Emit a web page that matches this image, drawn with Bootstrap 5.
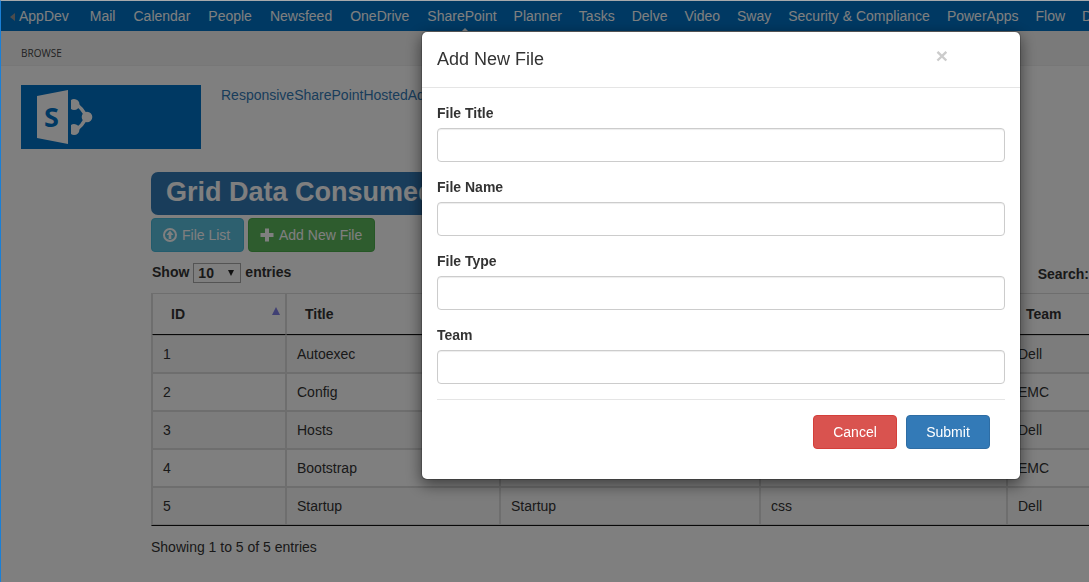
<!DOCTYPE html>
<html lang="en">
<head>
<meta charset="utf-8">
<meta name="viewport" content="width=device-width, initial-scale=1">
<title>Add New File</title>
<link href="https://cdn.jsdelivr.net/npm/bootstrap@5.3.0/dist/css/bootstrap.min.css" rel="stylesheet">
<style>
body { font-family: "Liberation Sans", Arial, sans-serif; font-size: 14px; line-height: 20px; color: #333; background: #fff; overflow: hidden; }
a { text-decoration: none; }
.page-shell { overflow: hidden; min-height: 100vh; }
.window-edge { position: fixed; inset: 0; z-index: 2000; pointer-events: none; border-top: 1px solid #a6a9ac; border-left: 1px solid #1a7fd6; }
.suite-bar { background: #0072c6; height: 31px; padding-left: 9px; padding-top: 1px; }
.suite-bar a { color: #fff; white-space: nowrap; }
.suite-bar .first-link { margin-right: 3px; }
.suite-links { gap: 18px; }
.suite-more { gap: 17px; }
.scroll-arrow { width: 6px; height: 10px; margin-right: 4px; margin-top: 2px; }
.current-link { position: relative; }
.current-link::after { content: ""; position: absolute; left: 50%; bottom: -5px; border: 3px solid transparent; border-top: 0; border-bottom-color: #fff; }
.ribbon { background: #f4f4f4; border-bottom: 1px solid #eee; height: 35px; padding: 12px 21px; font: 10px/20px "Open Sans", sans-serif; color: #444; }
.site-head { padding: 19px 21px 0; gap: 20px; }
.site-logo { width: 180px; height: 64px; background: #0072c6; }
.site-head a { color: #337ab7; }
.grid-area { margin-left: 151px; min-width: 1140px; padding-top: 23px; }
.grid-title { font-size: 27px; line-height: 30px; font-weight: 700; color: #fff; background: #337ab7; border-radius: 7px; padding: 5px 15px 8px; margin: 0 0 3px; }
.btn { font-size: 14px; line-height: 20px; padding: 6px 12px; border-radius: 4px; color: #fff; --bs-btn-color: #fff; }
.icon-btn { gap: 5px; padding: 6px 12px 6px 11px; }
.btn-list { background: #5bc0de; border-color: #46b8da; min-width: 93px; }
.btn-add { background: #5cb85c; border-color: #4cae4c; }
.btn-cancel { background: #d9534f; border-color: #d43f3a; min-width: 84px; }
.btn-submit { background: #337ab7; border-color: #2e6da4; min-width: 84px; }
.btn-icon { width: 14px; height: 14px; }
.grid-tools { font-weight: 700; margin-top: 10px; height: 31px; padding-left: 1px; }
.size-select { display: block; width: 48px; height: 20px; border: 1px solid #a9a9a9; border-radius: 0; padding: 0 4px; appearance: none; font-weight: 700; font-size: 14px; line-height: 18px; color: #333; background: #fff; }
.select-wrap { position: relative; margin: 1px 4px 0; }
.select-wrap svg { position: absolute; right: 7px; top: 7px; pointer-events: none; }
.search-box { width: 198px; height: 24px; }
.file-grid { border-collapse: separate; border-spacing: 0; table-layout: fixed; width: 1140px; border: 1px solid #ddd; border-top: 0; border-bottom-color: #111; }
.file-grid th, .file-grid td { border: 1px solid #ddd; padding: 8px 10px; }
.file-grid th { padding: 10px 18px; border-bottom-color: #111; }
.file-grid tbody tr:nth-child(odd) td { background: #f9f9f9; }
.sorted svg { position: absolute; right: 5px; top: 13px; }
.grid-info { padding-top: 11px; }
.modal { padding: 0; }
.modal-dialog { width: 600px; max-width: none; margin: 31px 68px 0 auto; }
.modal-content { border: 1px solid rgba(0,0,0,.2); border-radius: 6px; box-shadow: 0 5px 15px rgba(0,0,0,.5); background-clip: padding-box; color: #333; }
.modal-header { padding: 15px 15px 16px; height: 56px; border-bottom: 1px solid #e5e5e5; align-items: flex-start; }
.modal-title { font-size: 18px; line-height: 24px; font-weight: 400; }
.close-x { border: 0; background: none; padding: 0; margin-right: 57px; font-size: 21px; line-height: 18px; font-weight: 700; color: #ccc; }
.modal-body { padding: 15px 15px 0; }
.form-label { font-weight: 700; margin-bottom: 5px; display: block; }
.field { margin-bottom: 15px; }
.form-control { height: 34px; border: 1px solid #ccc; border-radius: 4px; font-size: 14px; box-shadow: inset 0 1px 1px rgba(0,0,0,.075); }
.modal-footer { margin: 0 15px; padding: 15px 15px 30px; border-top: 1px solid #e5e5e5; gap: 9px; }
.modal-footer > * { margin: 0; }
</style>
</head>
<body>
<div class="page-shell">
  <nav class="suite-bar d-flex align-items-center" aria-label="Suite">
    <svg class="scroll-arrow flex-shrink-0" viewBox="0 0 6 10" aria-hidden="true"><path d="M6 1v8L1 5z" fill="#999"/></svg>
    <div class="suite-links d-flex">
      <a class="first-link" href="#">AppDev</a><a href="#">Mail</a><a href="#">Calendar</a><a href="#">People</a><a href="#">Newsfeed</a><a href="#">OneDrive</a>
      <div class="suite-more d-flex">
        <a class="current-link" href="#">SharePoint</a><a href="#">Planner</a><a href="#">Tasks</a><a href="#">Delve</a><a href="#">Video</a><a href="#">Sway</a><a href="#">Security &amp; Compliance</a><a href="#">PowerApps</a><a href="#">Flow</a><a href="#">Dynamics</a>
      </div>
    </div>
  </nav>
  <div class="ribbon">BROWSE</div>
  <header class="site-head d-flex">
    <svg class="site-logo flex-shrink-0" viewBox="0 0 180 64" role="img" aria-label="SharePoint">
      <path d="M16 11 47 5v54l-31-6z" fill="#fff"/>
      <text x="23" y="42" font-family="Open Sans, sans-serif" font-size="27" font-weight="700" fill="#0072c6">S</text>
      <clipPath id="shareClip"><path d="M50 10h30v44H50z"/></clipPath>
      <g clip-path="url(#shareClip)">
        <path d="M54 19c6 3 9 7 11 13-2 6-5 10-11 13" fill="none" stroke="#fff" stroke-width="3.500"/>
        <circle cx="53" cy="19.500" r="5.500" fill="#fff"/><circle cx="53" cy="44.500" r="5.500" fill="#fff"/><circle cx="66" cy="32" r="5.300" fill="#fff"/>
      </g>
    </svg>
    <a href="#">ResponsiveSharePointHostedAddIn</a>
  </header>
  <main class="grid-area">
    <h1 class="grid-title d-table">Grid Data Consumed</h1>
    <div class="d-flex gap-1">
      <button class="btn btn-list icon-btn d-flex align-items-center" type="button"><svg class="btn-icon" viewBox="0 0 14 14" aria-hidden="true"><circle cx="7" cy="7" r="6" fill="none" stroke="#fff" stroke-width="2"/><path d="M7 2.500 10.500 7H8.300v4H5.700V7H3.500z" fill="#fff"/></svg>File List</button>
      <button class="btn btn-add icon-btn d-flex align-items-center" type="button"><svg class="btn-icon" viewBox="0 0 14 14" aria-hidden="true"><path d="M5 .5h4V5h4.500v4H9v4.500H5V9H.5V5H5z" fill="#fff"/></svg>Add New File</button>
    </div>
    <div class="grid-tools d-flex justify-content-between align-items-start">
      <div class="d-flex"><label for="pageSize">Show</label>
        <div class="select-wrap"><select id="pageSize" class="size-select"><option>10</option></select><svg width="6" height="6" viewBox="0 0 6 6" aria-hidden="true"><path d="M0 0h6L3 6z" fill="#222"/></svg></div>
        <span>entries</span></div>
      <div class="d-flex align-items-center gap-1"><label for="search">Search:</label><input id="search" class="search-box" type="search"></div>
    </div>
    <table class="file-grid">
      <colgroup><col style="width:134px"><col style="width:214px"><col style="width:260px"><col style="width:247px"><col></colgroup>
      <thead><tr><th class="sorted position-relative">ID<svg width="8" height="8" viewBox="0 0 8 8" aria-hidden="true"><path d="M0 8h8L4 0z" fill="#8080e8"/></svg></th><th>Title</th><th>Name</th><th>Type</th><th>Team</th></tr></thead>
      <tbody>
        <tr><td>1</td><td>Autoexec</td><td></td><td></td><td>Dell</td></tr>
        <tr><td>2</td><td>Config</td><td></td><td></td><td>EMC</td></tr>
        <tr><td>3</td><td>Hosts</td><td></td><td></td><td>Dell</td></tr>
        <tr><td>4</td><td>Bootstrap</td><td></td><td></td><td>EMC</td></tr>
        <tr><td>5</td><td>Startup</td><td>Startup</td><td>css</td><td>Dell</td></tr>
      </tbody>
    </table>
    <div class="grid-info">Showing 1 to 5 of 5 entries</div>
  </main>
</div>
<div class="modal-backdrop show"></div>
<div class="modal d-block" role="dialog" aria-modal="true" aria-labelledby="dialogTitle">
  <div class="modal-dialog">
    <form class="modal-content">
      <div class="modal-header d-flex justify-content-between">
        <h4 class="modal-title" id="dialogTitle">Add New File</h4>
        <button class="close-x" type="button" aria-label="Close">×</button>
      </div>
      <div class="modal-body">
        <div class="field"><label class="form-label" for="fileTitle">File Title</label><input class="form-control" id="fileTitle" type="text"></div>
        <div class="field"><label class="form-label" for="fileName">File Name</label><input class="form-control" id="fileName" type="text"></div>
        <div class="field"><label class="form-label" for="fileType">File Type</label><input class="form-control" id="fileType" type="text"></div>
        <div class="field"><label class="form-label" for="team">Team</label><input class="form-control" id="team" type="text"></div>
      </div>
      <div class="modal-footer d-flex justify-content-end">
        <button class="btn btn-cancel" type="button">Cancel</button>
        <button class="btn btn-submit" type="submit">Submit</button>
      </div>
    </form>
  </div>
</div>
<div class="window-edge"></div>
<script src="https://cdn.jsdelivr.net/npm/bootstrap@5.3.0/dist/js/bootstrap.bundle.min.js"></script>
</body>
</html>
